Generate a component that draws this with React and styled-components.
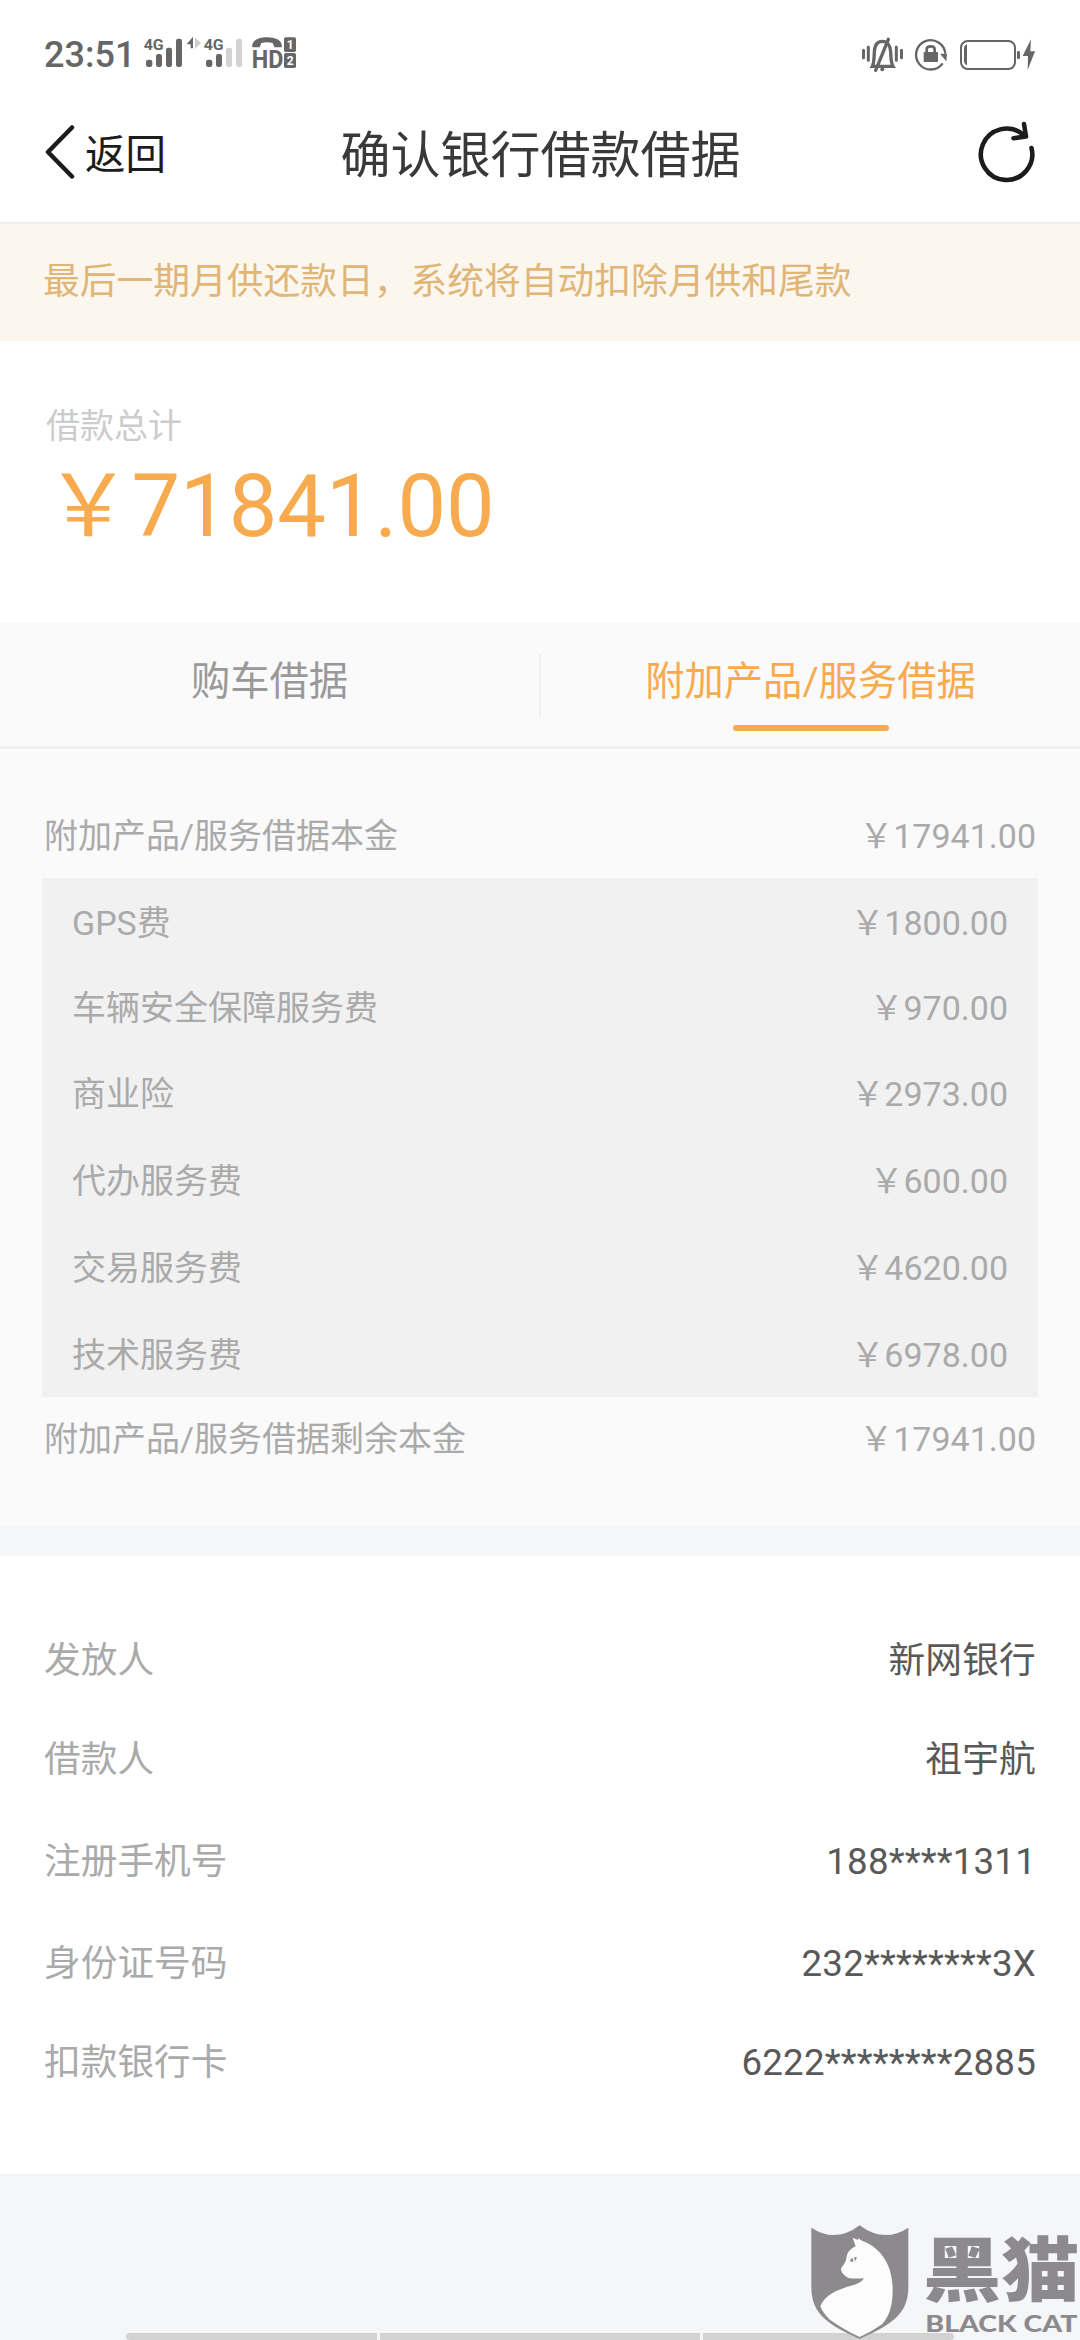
import React from 'react';
import styled, { createGlobalStyle } from 'styled-components';

const fees = [
  { label: 'GPS费', value: '￥1800.00', height: 84 },
  { label: '车辆安全保障服务费', value: '￥970.00', height: 85 },
  { label: '商业险', value: '￥2973.00', height: 88 },
  { label: '代办服务费', value: '￥600.00', height: 86 },
  { label: '交易服务费', value: '￥4620.00', height: 87 },
  { label: '技术服务费', value: '￥6978.00', height: 87 }
];

const details = [
  { label: '发放人', value: '新网银行', height: 98 },
  { label: '借款人', value: '祖宇航', height: 100 },
  { label: '注册手机号', value: '188****1311', height: 103 },
  { label: '身份证号码', value: '232********3X', height: 101 },
  { label: '扣款银行卡', value: '6222********2885', height: 97 }
];

const SignalIcons = () => (
  <svg width="160" height="70" viewBox="420 0 480 210" fill="#666">
    <SmallText x="431" y="95" fontSize="43" textLength="60" lengthAdjust="spacingAndGlyphs">4G</SmallText>
    <rect x="438" y="125" width="19" height="22" rx="7" />
    <rect x="468" y="108" width="18" height="39" rx="7" />
    <rect x="498" y="89" width="18" height="58" rx="7" />
    <rect x="528" y="62" width="18" height="85" rx="7" />
    <path d="M579 56v35h-7V79h-12z" />
    <path d="M585 59v33l18-17z" fill="#ccc" />
    <SmallText x="611" y="95" fontSize="43" textLength="60" lengthAdjust="spacingAndGlyphs">4G</SmallText>
    <rect x="618" y="125" width="19" height="22" rx="7" />
    <rect x="648" y="108" width="18" height="39" rx="7" />
    <rect x="678" y="89" width="18" height="58" rx="7" fill="#d2d2d2" />
    <rect x="708" y="62" width="18" height="85" rx="7" fill="#d2d2d2" />
    <path d="M757 88c-3-20 18-30 44-30s48 10 44 30h-22l-5-13q-17-5-34 0l-5 13z" />
    <SmallText x="755" y="150" fontSize="77" textLength="95" lengthAdjust="spacingAndGlyphs">HD</SmallText>
    <rect x="852" y="58" width="36" height="44" rx="5" />
    <rect x="852" y="105" width="36" height="45" rx="5" />
    <SmallText x="860" y="94" fontSize="36" fill="#fff">1</SmallText>
    <SmallText x="860" y="141" fontSize="36" fill="#fff">2</SmallText>
  </svg>
);

const DeviceIcons = () => (
  <svg width="180" height="70" viewBox="60 0 540 210" fill="#666">
    <g fill="none" stroke="#666" strokeWidth="9" strokeLinecap="round">
      <path d="M70.500 91v22M85 81v40M169 81v40M184.500 91v22" />
      <path d="M97 139c6-12 5-28 6-43 1-21 10-32 24-32s24 11 25 32c1 15 0 31 7 43z" strokeWidth="10" />
      <path d="M145 58L107 151" strokeWidth="10" />
    </g>
    <circle cx="127" cy="148" r="6" />
    <path d="M308 130a44 44 0 1 1 8-29" fill="none" stroke="#666" strokeWidth="7" />
    <path d="M300 101h21l-2 23z" />
    <rect x="251" y="96" width="43" height="30" rx="2" />
    <path d="M260 98V88q0-9 12-9t12 9v10" fill="none" stroke="#666" strokeWidth="8" />
    <rect x="363" y="63" width="162" height="84" rx="20" fill="none" stroke="#666" strokeWidth="6" />
    <path d="M381 73v63q-9-4-9-13V86q0-10 9-13z" />
    <rect x="531" y="93" width="9" height="24" rx="4" />
    <path d="M573 58l-25 50h16l-1 42 22-56h-14z" />
  </svg>
);

const BackIcon = () => (
  <svg width="32" height="60" viewBox="0 0 32 60" fill="none">
    <path d="M29 5.500L5 30 29 54.500" stroke="#1c1c1c" strokeWidth="4.500" strokeLinecap="round" strokeLinejoin="round" />
  </svg>
);

const RefreshIcon = () => (
  <svg width="64" height="64" viewBox="0 0 64 64" fill="none" stroke="#1c1c1c" strokeWidth="4.600" strokeLinecap="round" strokeLinejoin="round">
    <path d="M58.500 28A25.700 25.700 0 1 1 50 14.500" />
    <path d="M51 4l2 12.500L40.500 18.200" />
  </svg>
);

const BlackCatLogo = () => (
  <svg width="290" height="140" viewBox="0 0 870 420">
    <path d="M64 83q73 48 145-7 73 55 146 7v178c0 83-52 113-146 156C116 374 64 344 64 261z" fill="#8d8a8d" />
    <path d="M91 319C107 280 151 266 194 254q22-8 28-19-26 2-47-1c-12-7-22-15-22-29 14-17 15-23 17-36 3-14 14-24 27-30l-9-26 16 7 1-5 11 7c63 23 93 81 92 148 0 50-12 82-32 103q-30 22-67 38-51-24-89-52-20-17-29-40z" fill="#fcfcfc" />
    <path d="M180 182q5-11 20-11 0 14-15 15z" fill="#8d8a8d" />
    <path d="M188 171q7 6 2 14" fill="none" stroke="#fcfcfc" strokeWidth="4" />
    <LogoTitle x="399" y="288" fontSize="212" textLength="470" lengthAdjust="spacingAndGlyphs">黑猫</LogoTitle>
    <LogoCaption x="406" y="397" fontSize="68" textLength="456" lengthAdjust="spacingAndGlyphs">BLACK CAT</LogoCaption>
  </svg>
);

const App = () => (
  <Page>
    <GlobalStyle />
    <StatusBar>
      <StatusGroup>
        <Clock>23:51</Clock>
        <SignalIcons />
      </StatusGroup>
      <DeviceIcons />
    </StatusBar>
    <Header>
      <BackButton>
        <BackIcon />
        <BackLabel>返回</BackLabel>
      </BackButton>
      <Title>确认银行借款借据</Title>
      <RefreshButton>
        <RefreshIcon />
      </RefreshButton>
    </Header>
    <Notice>最后一期月供还款日，系统将自动扣除月供和尾款</Notice>
    <Summary>
      <SummaryLabel>借款总计</SummaryLabel>
      <SummaryAmount>￥71841.00</SummaryAmount>
    </Summary>
    <Tabs>
      <Tab>购车借据</Tab>
      <TabDivider />
      <Tab $active>附加产品/服务借据</Tab>
    </Tabs>
    <Receipt>
      <ReceiptRow $height={84}>
        <span>附加产品/服务借据本金</span>
        <span>￥17941.00</span>
      </ReceiptRow>
      <FeeList>
        {fees.map(fee => (
          <FeeRow key={fee.label} $height={fee.height}>
            <span>{fee.label}</span>
            <span>{fee.value}</span>
          </FeeRow>
        ))}
      </FeeList>
      <ReceiptRow $height={84}>
        <span>附加产品/服务借据剩余本金</span>
        <span>￥17941.00</span>
      </ReceiptRow>
    </Receipt>
    <Details>
      {details.map(item => (
        <DetailRow key={item.label} $height={item.height}>
          <span>{item.label}</span>
          <DetailValue>{item.value}</DetailValue>
        </DetailRow>
      ))}
    </Details>
    <Footer>
      <GestureBar>
        <GestureSegment $width={251} />
        <GestureSegment $width={320} />
        <GestureSegment $width={251} />
      </GestureBar>
      <Watermark>
        <BlackCatLogo />
      </Watermark>
    </Footer>
  </Page>
);

const GlobalStyle = createGlobalStyle`
  * {
    box-sizing: border-box;
  }

  body {
    background: #f5f6f8;
    font-family: Roboto, 'Noto Sans CJK SC', sans-serif;
    margin: 0;
  }

  svg {
    display: block;
    flex: none;
  }
`;

const Page = styled.div`
  display: flex;
  flex-direction: column;
  height: 2340px;
  overflow: hidden;
  width: 1080px;
`;

const StatusBar = styled.div`
  align-items: center;
  background: #fff;
  display: flex;
  height: 90px;
  justify-content: space-between;
  padding: 20px 40px 0 44px;
`;

const StatusGroup = styled.div`
  display: flex;
`;

const Clock = styled.span`
  color: #666;
  font-size: 36px;
  font-weight: 500;
  line-height: 74px;
  width: 96px;
`;

const SmallText = styled.text`
  font-family: Roboto, sans-serif;
  font-weight: 700;
`;

const Header = styled.header`
  align-items: center;
  background: #fff;
  border-bottom: 2px solid #eee;
  display: grid;
  grid-template-columns: 240px 1fr 240px;
  height: 134px;
  padding: 0 43px 8px 43px;
`;

const BackButton = styled.div`
  align-items: center;
  color: #1c1c1c;
  display: flex;
  font-size: 40.500px;
  gap: 10px;
`;

const BackLabel = styled.span`
  line-height: 54px;
  padding-top: 6px;
`;

const Title = styled.h1`
  color: #3a3937;
  font-size: 50px;
  font-weight: 400;
  line-height: 66px;
  margin: 0;
  padding: 8px 0 0 1px;
  text-align: center;
`;

const RefreshButton = styled.div`
  display: flex;
  justify-content: flex-end;
`;

const Notice = styled.div`
  background: #fcf7ee;
  color: #e0b576;
  font-size: 36.750px;
  height: 117px;
  line-height: 115px;
  padding-left: 43px;
`;

const Summary = styled.section`
  background: #fff;
  height: 282px;
  padding: 61px 44px 0;
`;

const SummaryLabel = styled.div`
  color: #ccc;
  font-size: 34px;
  line-height: 48px;
  padding-left: 2px;
`;

const SummaryAmount = styled.div`
  color: #f8aa4e;
  font-size: 86.500px;
  line-height: 114px;
  padding-left: 1px;
`;

const Tabs = styled.nav`
  background: #fafafa;
  border-bottom: 3px solid #f0f0f0;
  display: flex;
  height: 126px;
`;

const Tab = styled.div`
  align-items: center;
  color: ${props => (props.$active ? '#f8aa4e' : '#999')};
  display: flex;
  flex: 1;
  flex-direction: column;
  font-size: 39.300px;
  line-height: 46px;
  padding-top: 36px;

  &::after {
    background: ${props => (props.$active ? '#f8aa4e' : 'transparent')};
    border-radius: 3px;
    content: '';
    height: 6px;
    margin-top: 20px;
    width: 156px;
  }
`;

const TabDivider = styled.div`
  background: #f0f0f0;
  height: 63px;
  margin-top: 31px;
  width: 2px;
`;

const Receipt = styled.section`
  background: #fafafa;
  color: #aaa;
  font-size: 34px;
  height: 777px;
  padding: 45px 42px 0;
`;

const Row = styled.div`
  align-items: center;
  display: flex;
  height: ${props => props.$height}px;
  justify-content: space-between;
  line-height: 50px;
`;

const ReceiptRow = styled(Row)`
  padding: 0 2px;
`;

const FeeList = styled.div`
  background: #f1f1f1;
  height: 519px;
  padding: 3px 30px 0;
`;

const FeeRow = styled(Row)``;

const Details = styled.section`
  background: #fff;
  color: #aaa;
  font-size: 36.700px;
  height: 618px;
  margin-top: 30px;
  padding: 56px 44px 0;
`;

const DetailRow = styled(Row)``;

const DetailValue = styled.span`
  color: #595959;
  letter-spacing: 0.200px;
`;

const Footer = styled.footer`
  display: flex;
  flex: 1;
  flex-direction: column;
  justify-content: flex-end;
  position: relative;
`;

const GestureBar = styled.div`
  border-radius: 4px;
  display: flex;
  gap: 3px;
  height: 7px;
  margin: 0 auto;
  overflow: hidden;
`;

const GestureSegment = styled.div`
  background: #d2d2d2;
  width: ${props => props.$width}px;
`;

const Watermark = styled.div`
  bottom: 0;
  position: absolute;
  right: 0;
`;

const LogoTitle = styled.text`
  fill: #8d8a8d;
  font-family: 'Noto Sans CJK SC', sans-serif;
  font-weight: 900;
`;

const LogoCaption = styled.text`
  fill: #8d8a8d;
  font-family: Lato, sans-serif;
  font-weight: 900;
`;

export default App;
